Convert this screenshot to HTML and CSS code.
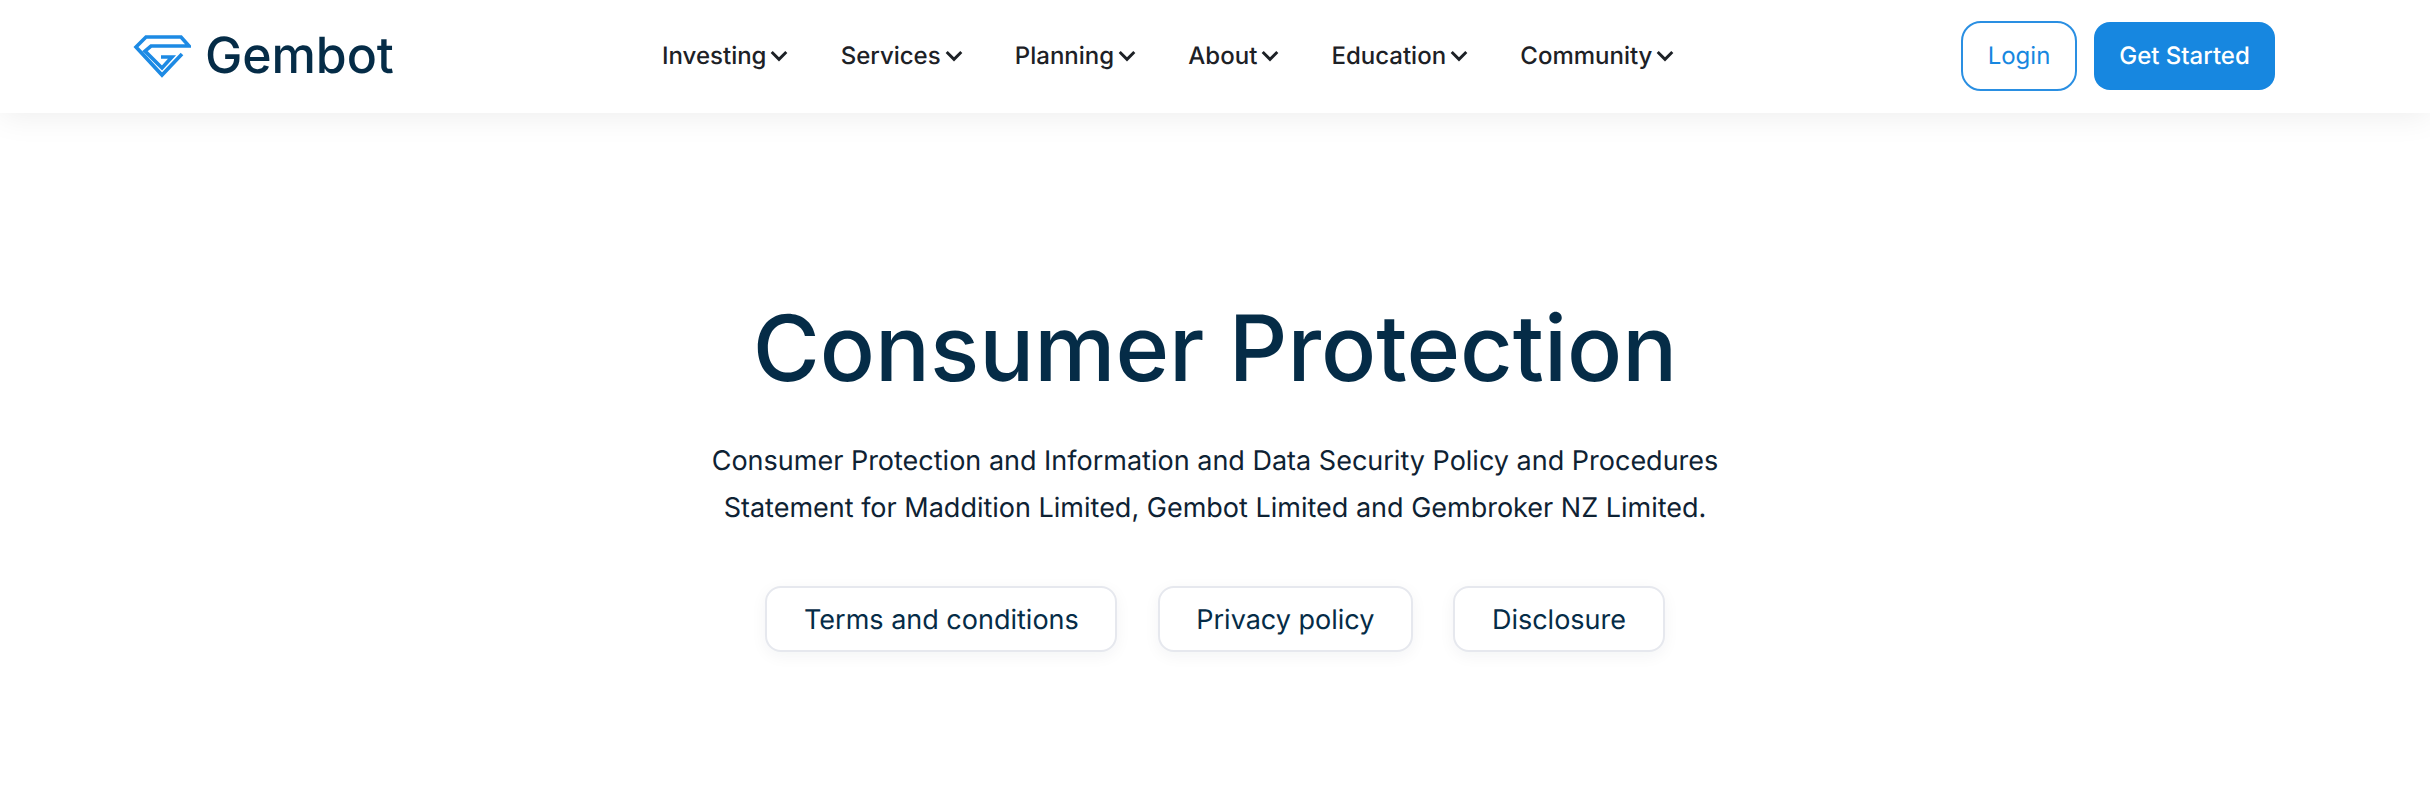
FILE: index.html
```html
<!DOCTYPE html>
<html lang="en">
<head>
<meta charset="utf-8">
<title>Consumer Protection - Gembot</title>
<link rel="stylesheet" href="styles.css">
</head>
<body>
<header class="site-header">
  <a class="brand" href="#">
    <svg class="brand-mark" viewBox="8 9 58 44" fill="none" stroke="#1d8ae4" stroke-width="3.6"><path d="M57 29 37 50 11 22 21 12H56L64 21H26L20 26 37 43 47 32H36"/></svg>
    <span class="brand-name">Gembot</span>
  </a>
  <nav class="main-nav">
    <a class="nav-item" href="#">Investing<svg class="chev" viewBox="0 0 16 10"><path d="M1.5 1.5 8 8l6.5-6.5"/></svg></a>
    <a class="nav-item" href="#">Services<svg class="chev" viewBox="0 0 16 10"><path d="M1.5 1.5 8 8l6.5-6.5"/></svg></a>
    <a class="nav-item" href="#">Planning<svg class="chev" viewBox="0 0 16 10"><path d="M1.5 1.5 8 8l6.5-6.5"/></svg></a>
    <a class="nav-item" href="#">About<svg class="chev" viewBox="0 0 16 10"><path d="M1.5 1.5 8 8l6.5-6.5"/></svg></a>
    <a class="nav-item" href="#">Education<svg class="chev" viewBox="0 0 16 10"><path d="M1.5 1.5 8 8l6.5-6.5"/></svg></a>
    <a class="nav-item" href="#">Community<svg class="chev" viewBox="0 0 16 10"><path d="M1.5 1.5 8 8l6.5-6.5"/></svg></a>
  </nav>
  <div class="actions">
    <a class="btn btn-outline" href="#">Login</a>
    <a class="btn btn-solid" href="#">Get Started</a>
  </div>
</header>
<main class="hero">
  <h1>Consumer Protection</h1>
  <p>Consumer Protection and Information and Data Security Policy and Procedures<br>Statement for Maddition Limited, Gembot Limited and Gembroker NZ Limited.</p>
  <div class="links">
    <a class="pill" href="#">Terms and conditions</a>
    <a class="pill" href="#">Privacy policy</a>
    <a class="pill" href="#">Disclosure</a>
  </div>
</main>
</body>
</html>
```
FILE: styles.css
```css
* { box-sizing: border-box; }
html, body { margin: 0; height: 100%; background: #fff; overflow: hidden; }
body { font-family: Inter, "Liberation Sans", sans-serif; color: #0e2233; text-rendering: geometricPrecision; }
a { text-decoration: none; color: inherit; }

.site-header {
  height: 113px;
  display: flex;
  align-items: center;
  padding: 0 155px 2px 133px;
  background: #fff;
  box-shadow: 0 4px 30px rgba(0, 0, 0, .07);
}
.brand { display: flex; align-items: center; gap: 14px; width: 529px; flex: none; }
.brand-mark { width: 58px; height: 44px; flex: none; }
.brand-name { font-size: 50px; font-weight: 500; color: #052c47; letter-spacing: -.1px; line-height: 1; }

.main-nav { display: flex; align-items: center; gap: 52.2px; font-size: 24px; font-weight: 500; color: #1d2126; }
.nav-item { display: flex; align-items: center; gap: 4px; }
.chev { width: 18px; height: 12px; fill: none; stroke: #1d2126; stroke-width: 2.6; }

.actions { margin-left: auto; display: flex; align-items: center; gap: 17px; font-size: 24px; }
.btn { display: flex; align-items: center; justify-content: center; }
.btn-outline { width: 116px; height: 70px; border: 2px solid #2a8fe2; border-radius: 20px; color: #1787e0; }
.btn-solid { width: 181px; height: 68px; border-radius: 16px; background: #1787e0; color: #fff; font-weight: 500; }

.hero { display: flex; flex-direction: column; align-items: center; padding-top: 178px; text-align: center; }
h1 { margin: 0; font-size: 91.4px; line-height: 116px; font-weight: 500; color: #052c47; }
p { margin: 31px 0 0; font-size: 27px; line-height: 46.5px; color: #0e2233; }
.links { display: flex; gap: 40.5px; margin-top: 55px; }
.pill {
  height: 66px;
  padding: 0 36.5px;
  display: flex;
  align-items: center;
  font-size: 27px;
  color: #052c47;
  background: #fff;
  border: 2px solid #e6e8ee;
  border-radius: 16px;
  box-shadow: 0 4px 16px rgba(10, 30, 60, .05);
}
```
